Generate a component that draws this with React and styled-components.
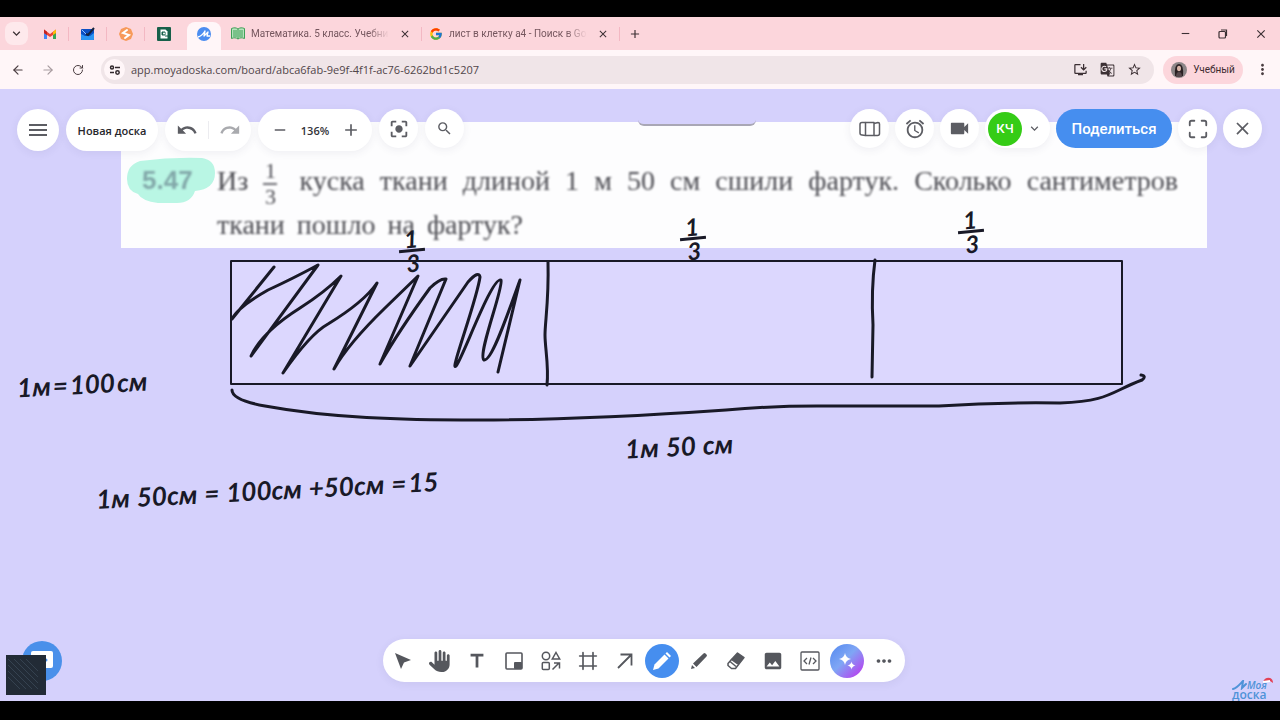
import React, { useState } from "react";
import styled, { createGlobalStyle } from "styled-components";
import {
  MdAdd,
  MdAlarm,
  MdCenterFocusStrong,
  MdClose,
  MdExpandMore,
  MdGTranslate,
  MdImage,
  MdInstallDesktop,
  MdMenu,
  MdMoreHoriz,
  MdMoreVert,
  MdRedo,
  MdRemove,
  MdSearch,
  MdStarOutline,
  MdTitle,
  MdUndo,
  MdVideocam,
} from "react-icons/md";
import { FaHand } from "react-icons/fa6";
import { FcGoogle } from "react-icons/fc";
import { ArrowLeft, ArrowRight, Frame, Maximize, RotateCw } from "lucide-react";

const INK = "#191927";

/* ---------- icons ---------- */

const GmailIcon = () => (
  <svg width="14" height="12" viewBox="0 0 14 12">
    <path d="M1 11V3l3 2v6z" fill="#4285f4" />
    <path d="M10 11V5l3-2v8z" fill="#34a853" />
    <path d="M1 1.500 7 6l6-4.500V5L7 9 1 5z" fill="#ea4335" />
    <path d="M10 3.700 13 1.500V5l-3 2z" fill="#fbbc04" />
    <path d="M1 1.500 4 3.700V7L1 5z" fill="#c5221f" />
  </svg>
);

const InboxIcon = () => (
  <svg width="14" height="13" viewBox="0 0 14 13">
    <rect y="2" width="13" height="11" rx="1" fill="#0b4fc4" />
    <path d="M0 7l4 2h5l4-3v6l-1 1H1l-1-1z" fill="#2b95f3" />
    <path d="M5 7l2 1 6-7" fill="none" stroke="#15233f" strokeWidth="2" />
    <path d="M1 3l4 4" stroke="#8fc0ff" strokeWidth="1" />
  </svg>
);

const OrangeIcon = () => (
  <svg width="14" height="14" viewBox="0 0 14 14">
    <path d="M7 0l5 2 2 5-2 5-5 2-5-2-2-5 2-5z" fill="#f79a5a" />
    <path d="M8 3 4 6l6 2-4 3" fill="none" stroke="#fff" strokeWidth="2" strokeLinecap="round" />
  </svg>
);

const GreenIcon = () => (
  <svg width="14" height="14" viewBox="0 0 14 14">
    <rect width="14" height="14" rx="1" fill="#17604a" />
    <path d="M3.500 2.500h5l2 2v7h-7z" fill="#fff" />
    <path d="M5 5h3v3H5zM8 9h3" fill="#17604a" stroke="#17604a" />
    <circle cx="7" cy="6.500" r="1" fill="#fff" />
  </svg>
);

const BoardIcon = () => (
  <svg width="14" height="14" viewBox="0 0 14 14">
    <circle cx="7" cy="7" r="7" fill="#4b8df0" />
    <path d="M1 10Q5 9 8 4L7 9l4-4-1 4h3" fill="none" stroke="#fff" strokeWidth="1.300" strokeLinejoin="round" />
  </svg>
);

const BookIcon = () => (
  <svg width="14" height="13" viewBox="0 0 14 13" fill="#b5e3bc" stroke="#3f9f57" strokeWidth="1">
    <path d="M.5 1.500C3 .5 5 .5 7 2c2-1.500 4-1.500 6.500-.5v10C11 10.500 9 10.500 7 12c-2-1.500-4-1.500-6.500-.5z" />
    <path d="M7 2v10M3 3v7M5 3v7M9 3v7M11 3v7" />
  </svg>
);

const RestoreIcon = () => (
  <svg width="10" height="10" viewBox="0 0 10 10" fill="none" stroke="#3c3034" strokeWidth="1.200">
    <rect x="1" y="2.500" width="6.500" height="6.500" rx="1" />
    <path d="M3 1h5.500v6" />
  </svg>
);

const SiteIcon = () => (
  <svg width="12" height="12" viewBox="0 0 12 12" fill="none" stroke="#33292d" strokeWidth="1.500">
    <circle cx="3" cy="3.500" r="1.500" />
    <path d="M6 3.500h5M1 8.500h4" />
    <circle cx="8.500" cy="8.500" r="1.700" />
  </svg>
);

const PanelsIcon = () => (
  <svg width="22" height="16" viewBox="0 0 22 16" fill="none" stroke="currentColor" strokeWidth="1.500" strokeLinejoin="round">
    <path d="M6.500 1.500h8.500v13H6.500z" />
    <path d="M6.500 1.500H3Q1 1.500 1 3.500v8.500Q1 14 3 14l3.500.5M15 2.500l4-1q1.500 0 1.500 1.500v9.500q0 2-2 2H15" />
  </svg>
);

const CursorIcon = () => (
  <svg width="18" height="18" viewBox="0 0 18 18" fill="currentColor">
    <path d="M1 1l16 7-7 2.500L7 17z" />
  </svg>
);

const StickerIcon = () => (
  <svg width="18" height="18" viewBox="0 0 18 18">
    <rect x="1" y="1" width="16" height="16" rx="1" fill="none" stroke="currentColor" strokeWidth="1.600" />
    <rect x="9" y="10" width="8" height="7" rx="1" fill="currentColor" />
  </svg>
);

const ShapesIcon = () => (
  <svg width="20" height="20" viewBox="0 0 20 20" fill="none" stroke="currentColor" strokeWidth="1.500">
    <circle cx="5" cy="5" r="3.700" />
    <path d="M15 1.500 18.700 8h-7.400z" />
    <rect x="1.300" y="11.500" width="7" height="7" rx="1" />
    <path d="M11.500 18.500 18 12m-5 0h5.500v5.500" />
  </svg>
);

const ArrowIcon = () => (
  <svg width="18" height="18" viewBox="0 0 18 18" fill="none" stroke="currentColor" strokeWidth="1.800">
    <path d="M2 16 15.500 2.500M4.500 2.500h11v11" />
  </svg>
);

const PenIcon = () => (
  <svg width="20" height="20" viewBox="0 0 20 20" fill="currentColor">
    <path d="M1 19l1.500-5.500L12.500 3.500l4 4L6.500 17.500z" />
    <path d="M13.500 2.500 15 1l4 4-1.500 1.500z" />
  </svg>
);

const MarkerIcon = () => (
  <svg width="18" height="18" viewBox="0 0 18 18" fill="currentColor">
    <path d="M1 17l1-4 3 3zM3 11.500 13.500 1.500q1-1 2 0l1 1q1 1 0 2L6.500 15z" />
  </svg>
);

const EraserIcon = () => (
  <svg width="20" height="20" viewBox="0 0 20 20" stroke="currentColor" strokeWidth="1.500" strokeLinejoin="round">
    <path d="M11.500 2 18 6.500l-5.500 7L5.500 8.500z" fill="currentColor" />
    <path d="M5.500 8.500l7 5-3 4H5.500L2 14.500V12.500z" fill="#fff" />
    <path d="M4 10.500l6 5" />
  </svg>
);

const CodeIcon = () => (
  <svg width="20" height="20" viewBox="0 0 20 20" fill="none" stroke="currentColor" strokeWidth="1.300">
    <rect x="1" y="1" width="18" height="18" rx="1" />
    <path d="M7 7l-3 3 3 3M13 7l3 3-3 3M11 6.500l-2 7" />
  </svg>
);

const SparkIcon = () => (
  <svg width="18" height="18" viewBox="0 0 18 18" fill="#fff">
    <path d="M7 1q.8 5 6 6-5.200 1-6 6-.8-5-6-6 5.200-1 6-6zM13.500 9.500q.5 3 4 4-3.500.8-4 4-.5-3.200-4-4 3.500-1 4-4z" />
  </svg>
);

/* ---------- data ---------- */

const pinnedTabs = [
  { name: "Gmail", icon: <GmailIcon /> },
  { name: "Почта", icon: <InboxIcon /> },
  { name: "Сервис", icon: <OrangeIcon /> },
  { name: "Журнал", icon: <GreenIcon /> },
];

const tools = [
  { name: "Выбор", icon: <CursorIcon /> },
  { name: "Рука", icon: <FaHand size={22} /> },
  { name: "Текст", icon: <MdTitle size={22} /> },
  { name: "Стикер", icon: <StickerIcon /> },
  { name: "Фигуры", icon: <ShapesIcon /> },
  { name: "Фрейм", icon: <Frame size={20} /> },
  { name: "Стрелка", icon: <ArrowIcon /> },
  { name: "Карандаш", icon: <PenIcon /> },
  { name: "Маркер", icon: <MarkerIcon /> },
  { name: "Ластик", icon: <EraserIcon /> },
  { name: "Картинка", icon: <MdImage size={22} /> },
  { name: "Код", icon: <CodeIcon /> },
  { name: "Ассистент", icon: <SparkIcon />, magic: true },
  { name: "Ещё", icon: <MdMoreHoriz size={22} /> },
];

const fractions = [
  { left: 399, top: 139 },
  { left: 680, top: 127 },
  { left: 958, top: 120 },
];

const App = () => {
  const [tool, setTool] = useState("Карандаш");

  return (
    <StPage>
      <GlobalStyle />
      <StTabBar>
        <StTabSearch aria-label="Поиск вкладок">
          <MdExpandMore size={15} />
        </StTabSearch>
        {pinnedTabs.map((tab) => (
          <StPinnedTab key={tab.name} aria-label={tab.name}>
            {tab.icon}
          </StPinnedTab>
        ))}
        <StActiveTab aria-label="Моя доска">
          <BoardIcon />
        </StActiveTab>
        <StTab>
          <BookIcon />
          <StTabTitle>Математика. 5 класс. Учебник</StTabTitle>
          <StTabClose aria-label="Закрыть вкладку">
            <MdClose size={12} />
          </StTabClose>
        </StTab>
        <StTab>
          <FcGoogle size={14} />
          <StTabTitle>лист в клетку а4 - Поиск в Go</StTabTitle>
          <StTabClose aria-label="Закрыть вкладку">
            <MdClose size={12} />
          </StTabClose>
        </StTab>
        <StNewTab aria-label="Новая вкладка">
          <MdAdd size={14} />
        </StNewTab>
        <StSpace />
        <StWindowButton aria-label="Свернуть">
          <MdRemove size={13} />
        </StWindowButton>
        <StWindowButton aria-label="Восстановить">
          <RestoreIcon />
        </StWindowButton>
        <StWindowButton aria-label="Закрыть">
          <MdClose size={14} />
        </StWindowButton>
      </StTabBar>

      <StAddressBar>
        <StNavButton aria-label="Назад">
          <ArrowLeft size={14} />
        </StNavButton>
        <StNavButton aria-label="Вперёд" disabled>
          <ArrowRight size={14} />
        </StNavButton>
        <StNavButton aria-label="Обновить">
          <RotateCw size={12} />
        </StNavButton>
        <StOmnibox>
          <StSiteButton aria-label="О сайте">
            <SiteIcon />
          </StSiteButton>
          <StUrl
            aria-label="Адрес"
            defaultValue="app.moyadoska.com/board/abca6fab-9e9f-4f1f-ac76-6262bd1c5207"
          />
          <StOmniButton aria-label="Установить">
            <MdInstallDesktop size={15} />
          </StOmniButton>
          <StOmniButton aria-label="Перевести">
            <MdGTranslate size={15} />
          </StOmniButton>
          <StOmniButton aria-label="В закладки">
            <MdStarOutline size={15} />
          </StOmniButton>
        </StOmnibox>
        <StProfile>
          <svg width="16" height="16" viewBox="0 0 16 16">
            <circle cx="8" cy="8" r="8" fill="#8c8587" />
            <path d="M4 14Q3 2 8 2t4 12z" fill="#2a2023" />
            <ellipse cx="8" cy="6.500" rx="2" ry="2.800" fill="#d8b5a8" />
            <path d="M5 15q0-5 3-5t3 5z" fill="#56474c" />
          </svg>
          Учебный
        </StProfile>
        <StNavButton aria-label="Меню браузера">
          <MdMoreVert size={17} />
        </StNavButton>
      </StAddressBar>

      <StBoard>
        <StTask>
          <StTaskNumber>
            <StMark width="90" height="48" viewBox="0 0 90 48">
              <path d="M14 4Q45 0 76 1q13 2 13 15 0 16-20 18-4 12-18 12H32Q16 44 12 37 1 34 1 22 1 8 14 4z" fill="#b9f6e4" />
            </StMark>
            <StTaskDigits>5.47</StTaskDigits>
          </StTaskNumber>
          <StTaskText>
            <StTaskLine>
              Из{" "}
              <StPrintFraction>
                <StPrintTop>1</StPrintTop>
                <span>3</span>
              </StPrintFraction>{" "}
              куска ткани длиной 1 м 50 см сшили фартук. Сколько сантиметров
            </StTaskLine>
            <StTaskEnd>ткани пошло на фартук?</StTaskEnd>
          </StTaskText>
        </StTask>
        <StDragHandle />

        <StDrawing width="1280" height="612" viewBox="0 89 1280 612">
          <rect x="231" y="261" width="891" height="123" fill="#dcd7fe" strokeWidth="2" />
          <path d="M274 267 L232 319 Q238 307 268 290 Q292 279 318 265 L251 356 Q262 332 300 308 Q325 292 341 276 L283 373 Q310 334 328 324 Q364 302 377 283 L334 369 Q348 344 385 308 L418 276 L380 364 Q398 332 430 288 Q440 278 446 279 L410 366 L468 282 Q479 270 480 277 C477 300 449 374 456 366 C462 360 492 276 501 280 C504 287 477 355 484 360 C492 362 509 310 520 280 L498 372" />
          <path d="M548 262C549 300 545 322 545 335S549 366 547 385" />
          <path d="M875 260Q871 290 873 325 L872 377" />
          <path d="M232 390Q232 400 265 406C330 418 400 420 478 420C560 420 640 416 726 410Q770 406 817 406H939Q1000 402 1060 403C1110 401 1110 392 1142 380Q1147 376 1141 375" />
        </StDrawing>

        {fractions.map((pos) => (
          <StFraction key={pos.left} $left={pos.left} $top={pos.top}>
            <StFractionTop>1</StFractionTop>
            <span>3</span>
          </StFraction>
        ))}
        <StNote $left={17} $top={280}>
          <span>1м</span>
          <span>=</span>
          <span>100</span>
          <span>см</span>
        </StNote>
        <StNote $left={625} $top={342}>
          <span>1м</span>
          <StWord>50</StWord>
          <StWord>см</StWord>
        </StNote>
        <StNote $left={96} $top={386}>
          <span>1м</span>
          <StWord>50см</StWord>
          <StWord>=</StWord>
          <StWord>100см</StWord>
          <StWord>+50см</StWord>
          <StWord>=</StWord>
          <span>15</span>
        </StNote>

        <StTopBar>
          <StRound $size={42} aria-label="Меню">
            <MdMenu size={24} />
          </StRound>
          <StBoardName>Новая доска</StBoardName>
          <StPill $width={86}>
            <StPillButton aria-label="Отменить">
              <MdUndo size={22} />
            </StPillButton>
            <StDivider />
            <StPillButton aria-label="Повторить" disabled>
              <MdRedo size={22} />
            </StPillButton>
          </StPill>
          <StPill $width={114}>
            <StPillButton aria-label="Уменьшить">
              <MdRemove size={18} />
            </StPillButton>
            <StZoom>136%</StZoom>
            <StPillButton aria-label="Увеличить">
              <MdAdd size={20} />
            </StPillButton>
          </StPill>
          <StRound $size={39} aria-label="Центр">
            <MdCenterFocusStrong size={22} />
          </StRound>
          <StRound $size={39} aria-label="Поиск">
            <MdSearch size={17} />
          </StRound>
          <StSpace />
          <StRightTools>
            <StRound $size={39} aria-label="Панели">
              <PanelsIcon />
            </StRound>
            <StRound $size={39} aria-label="Таймер">
              <MdAlarm size={22} />
            </StRound>
            <StRound $size={39} aria-label="Видео">
              <MdVideocam size={23} />
            </StRound>
            <StUser>
              <StAvatar>КЧ</StAvatar>
              <MdExpandMore size={15} />
            </StUser>
            <StShare>Поделиться</StShare>
            <StRound $size={39} aria-label="Во весь экран">
              <Maximize size={22} strokeWidth={2} />
            </StRound>
            <StRound $size={39} aria-label="Выйти">
              <MdClose size={21} />
            </StRound>
          </StRightTools>
        </StTopBar>

        <StBottomBar>
          <StTools>
            {tools.map((item) => (
              <StTool
                key={item.name}
                aria-label={item.name}
                $active={item.name === tool}
                $magic={item.magic}
                onClick={() => setTool(item.name)}
              >
                <StToolFace>{item.icon}</StToolFace>
              </StTool>
            ))}
          </StTools>
        </StBottomBar>

        <StChat aria-label="Чат">
          <svg width="24" height="20" viewBox="0 0 24 20">
            <rect x="1" y="0" width="22" height="17" rx="2" fill="#fff" />
            <circle cx="16" cy="9" r="1.500" fill="#4a90ea" />
          </svg>
        </StChat>
        <StPreview>
          <svg width="40" height="40" viewBox="0 0 40 40" stroke="#354250" strokeWidth="1" fill="none">
            <path d="M2 4l30 30M2 10l24 24M2 16l18 18M2 22l12 12M8 4l24 24M14 4l18 18M20 4l12 12" />
          </svg>
        </StPreview>

        <StBrand>
          <StBrandTop>
            <svg width="15" height="10" viewBox="0 0 15 10" fill="none" stroke="#4f93d8" strokeWidth="2" strokeLinecap="round">
              <path d="M1 9C5 8 8 4 11 1l-1 7 4-4" />
            </svg>
            Моя
            <StHat width="12" height="7" viewBox="0 0 12 7">
              <path d="M1 5Q3 0 8 1q3 1 3 5L8 4z" fill="#e34256" />
              <path d="M1 5l7-1" stroke="#fff" strokeWidth="2" />
            </StHat>
          </StBrandTop>
          <StBrandBottom>доска</StBrandBottom>
        </StBrand>
      </StBoard>
    </StPage>
  );
};

export default App;

const GlobalStyle = createGlobalStyle`
  * {
    box-sizing: border-box;
  }

  body {
    margin: 0;
    background: #000;
    font-family: "Open Sans", "Noto Sans", sans-serif;
  }

  button {
    display: flex;
    align-items: center;
    justify-content: center;
    padding: 0;
    border: 0;
    background: none;
    color: inherit;
    font: inherit;
    cursor: pointer;
  }

  svg {
    flex-shrink: 0;
  }
`;

const StPage = styled.div`
  display: flex;
  flex-direction: column;
  min-height: 100vh;
  padding: 17px 0 19px;
  background: #000;
`;

const StTabBar = styled.div`
  display: flex;
  align-items: center;
  height: 33px;
  padding-left: 5px;
  background: #fcd6dc;
  color: #3c3034;
`;

const StTabSearch = styled.button`
  width: 23px;
  height: 23px;
  margin-right: 3px;
  border-radius: 8px;
  background: #fee9ec;
`;

const StPinnedTab = styled.button`
  width: 38px;
  height: 14px;
  border-right: 1px solid #f3b8c3;

  &:nth-of-type(5) {
    border-color: transparent;
  }
`;

const StActiveTab = styled.button`
  align-self: flex-end;
  width: 34px;
  height: 28px;
  margin: 0 3px 0 4px;
  padding-bottom: 4px;
  border-radius: 8px 8px 0 0;
  background: #fff6f8;
`;

const StTab = styled.div`
  display: flex;
  align-items: center;
  gap: 6px;
  width: 198px;
  height: 14px;
  padding: 0 6px 0 7px;
  border-right: 1px solid #f3b8c3;
`;

const StTabTitle = styled.span`
  flex: 1;
  overflow: hidden;
  white-space: nowrap;
  font-family: Roboto, "Open Sans", sans-serif;
  font-size: 10px;
  line-height: 16px;
  color: #75565e;
  mask-image: linear-gradient(to right, #000 85%, transparent);
`;

const StTabClose = styled.button`
  width: 20px;
  height: 14px;
`;

const StNewTab = styled.button`
  width: 30px;
  height: 30px;
`;

const StWindowButton = styled.button`
  width: 38px;
  height: 33px;
`;

const StSpace = styled.div`
  flex: 1;
`;

const StAddressBar = styled.div`
  display: flex;
  align-items: center;
  height: 39px;
  padding: 0 3px;
  background: #fff6f8;
`;

const StNavButton = styled.button`
  width: 30px;
  height: 30px;
  color: #4a3d41;

  &:disabled {
    color: #a79b9f;
  }
`;

const StOmnibox = styled.div`
  display: flex;
  align-items: center;
  flex: 1;
  height: 28px;
  margin: 0 9px 0 8px;
  padding: 0 6px 0 3px;
  border-radius: 14px;
  background: #f0e5e8;
  color: #3c3034;
`;

const StSiteButton = styled.button`
  width: 21px;
  height: 21px;
  border-radius: 50%;
  background: #fff6f8;
`;

const StUrl = styled.input`
  flex: 1;
  min-width: 0;
  height: 20px;
  margin-left: 6px;
  padding: 0;
  border: 0;
  outline: 0;
  background: none;
  font-family: "Open Sans", "Noto Sans", sans-serif;
  font-size: 11px;
  color: #51464a;
`;

const StOmniButton = styled.button`
  width: 27px;
  height: 24px;
`;

const StProfile = styled.button`
  gap: 6px;
  width: 80px;
  height: 28px;
  margin-right: 4px;
  border-radius: 14px;
  background: #fcd6dc;
  font-family: Roboto, "Open Sans", sans-serif;
  font-size: 10px;
  color: #3c2a30;
`;

const StBoard = styled.main`
  position: relative;
  flex: 1;
  min-height: 611px;
  overflow: hidden;
  background: #d5d1fc;
`;

/* the printed task lies on the board as a picture */
const StTask = styled.section`
  position: absolute;
  left: 121px;
  top: 33px;
  display: flex;
  align-items: flex-start;
  width: 1086px;
  height: 126px;
  padding: 35px 29px 0 5px;
  background: #fdfdfe;
`;

const StTaskNumber = styled.div`
  position: relative;
  width: 91px;
  padding-left: 16px;
`;

const StMark = styled.svg`
  position: absolute;
  left: 0;
  top: 0;
`;

const StTaskDigits = styled.span`
  position: relative;
  font-family: "Liberation Sans", sans-serif;
  font-size: 26px;
  font-weight: 700;
  line-height: 46px;
  color: #82a8a9;
  filter: blur(1px);
`;

const StTaskText = styled.div`
  flex: 1;
  font-family: "Liberation Serif", serif;
  font-size: 28px;
  color: #4c4c52;
  filter: blur(1px);
`;

const StTaskLine = styled.div`
  height: 46px;
  line-height: 48px;
  white-space: nowrap;
  text-align: justify;
  text-align-last: justify;
`;

const StTaskEnd = styled.div`
  max-width: 306px;
  line-height: 44px;
  white-space: nowrap;
  text-align-last: justify;
`;

const StPrintFraction = styled.span`
  display: inline-flex;
  flex-direction: column;
  width: 14px;
  margin-right: 7px;
  vertical-align: middle;
  text-align: center;
  text-align-last: center;
  font-size: 22px;
  line-height: 24px;
`;

const StPrintTop = styled.span`
  border-bottom: 2px solid #6c6c72;
`;

const StDragHandle = styled.div`
  position: absolute;
  left: 638px;
  top: 31px;
  width: 118px;
  height: 6px;
  border-bottom: 2px solid #a9a7b5;
  border-radius: 0 0 8px 8px;
  background: #d5d1fc;
`;

const StDrawing = styled.svg`
  position: absolute;
  left: 0;
  top: 0;
  fill: none;
  stroke: ${INK};
  stroke-width: 3;
  stroke-linecap: round;
  stroke-linejoin: round;
`;

const StFraction = styled.div`
  position: absolute;
  left: ${(props) => props.$left}px;
  top: ${(props) => props.$top}px;
  display: flex;
  flex-direction: column;
  width: 26px;
  text-align: center;
  font-family: Lato, "Open Sans", sans-serif;
  font-size: 24px;
  font-style: italic;
  font-weight: 700;
  line-height: 21px;
  color: ${INK};
  transform: rotate(-5deg);
`;

const StFractionTop = styled.span`
  border-bottom: 3px solid ${INK};
`;

const StNote = styled.div`
  position: absolute;
  left: ${(props) => props.$left}px;
  top: ${(props) => props.$top}px;
  display: flex;
  gap: 2px;
  white-space: nowrap;
  font-family: Lato, "Open Sans", sans-serif;
  font-size: 26px;
  font-style: italic;
  font-weight: 700;
  line-height: 30px;
  color: ${INK};
  transform: rotate(-3deg);
`;

const StWord = styled.span`
  margin-left: 5px;
`;

const StTopBar = styled.header`
  position: absolute;
  left: 0;
  right: 0;
  top: 20px;
  display: flex;
  align-items: flex-start;
  gap: 7px;
  padding: 0 18px 0 17px;
  color: #5c5d63;
`;

const StRound = styled.button`
  width: ${(props) => props.$size}px;
  height: ${(props) => props.$size}px;
  border-radius: 50%;
  background: #fff;
  box-shadow: 0 2px 8px rgba(60, 60, 100, 0.08);
`;

const StBoardName = styled.button`
  width: 92px;
  height: 42px;
  border-radius: 21px;
  background: #fff;
  box-shadow: 0 2px 8px rgba(60, 60, 100, 0.08);
  font-size: 11px;
  font-weight: 600;
  color: #26262b;
`;

const StPill = styled.div`
  display: flex;
  align-items: center;
  justify-content: space-between;
  width: ${(props) => props.$width}px;
  height: 42px;
  padding: 0 4px;
  border-radius: 21px;
  background: #fff;
  box-shadow: 0 2px 8px rgba(60, 60, 100, 0.08);
`;

const StPillButton = styled.button`
  width: 35px;
  height: 40px;

  &:disabled {
    color: #a9aaae;
  }
`;

const StDivider = styled.div`
  width: 1px;
  height: 18px;
  background: #ececf0;
`;

const StZoom = styled.span`
  font-size: 11px;
  font-weight: 600;
  color: #333338;
`;

const StRightTools = styled.div`
  display: flex;
  gap: 6px;
`;

const StUser = styled.button`
  justify-content: flex-start;
  gap: 5px;
  width: 65px;
  height: 39px;
  padding-left: 3px;
  border-radius: 20px;
  background: #fff;
  box-shadow: 0 2px 8px rgba(60, 60, 100, 0.08);
`;

const StAvatar = styled.span`
  width: 34px;
  height: 34px;
  border-radius: 50%;
  background: #35cc16;
  font-family: Roboto, sans-serif;
  font-size: 13px;
  font-weight: 500;
  line-height: 34px;
  text-align: center;
  color: #fff;
`;

const StShare = styled.button`
  width: 116px;
  height: 39px;
  border-radius: 20px;
  background: #468eef;
  font-family: Roboto, sans-serif;
  font-size: 15px;
  font-weight: 500;
  color: #fff;
`;

const StBottomBar = styled.footer`
  position: absolute;
  left: 0;
  right: 0;
  bottom: 19px;
  display: flex;
  justify-content: center;
  padding-left: 7px;
`;

const StTools = styled.div`
  display: flex;
  align-items: center;
  height: 43px;
  padding: 0 2px;
  border-radius: 22px;
  background: #fff;
  box-shadow: 0 2px 8px rgba(60, 60, 100, 0.08);
`;

const StToolFace = styled.span`
  display: flex;
  align-items: center;
  justify-content: center;
  width: 34px;
  height: 34px;
  border-radius: 50%;
`;

const StTool = styled.button`
  width: 37px;
  height: 43px;
  color: ${(props) => (props.$active ? "#fff" : "#55575d")};

  ${StToolFace} {
    background: ${(props) =>
      props.$magic
        ? "linear-gradient(135deg, #5d8ff0 10%, #7fa6f5 45%, #b04df0 85%)"
        : props.$active
        ? "#468eef"
        : "none"};
  }
`;

const StChat = styled.button`
  position: absolute;
  left: 22px;
  bottom: 20px;
  width: 40px;
  height: 40px;
  border-radius: 50%;
  background: #4a90ea;
`;

const StPreview = styled.div`
  position: absolute;
  left: 6px;
  bottom: 6px;
  width: 40px;
  height: 40px;
  background: #222b36;
`;

const StBrand = styled.div`
  position: absolute;
  right: 6px;
  bottom: 0;
  width: 42px;
  font-family: "Open Sans", sans-serif;
  font-weight: 600;
  color: #4f93d8;
`;

const StBrandTop = styled.div`
  position: relative;
  display: flex;
  align-items: center;
  height: 9px;
  font-size: 10px;
  font-style: italic;
  line-height: 10px;
`;

const StHat = styled.svg`
  position: absolute;
  right: 0;
  top: -3px;
`;

const StBrandBottom = styled.div`
  font-size: 12px;
  line-height: 12px;
`;
